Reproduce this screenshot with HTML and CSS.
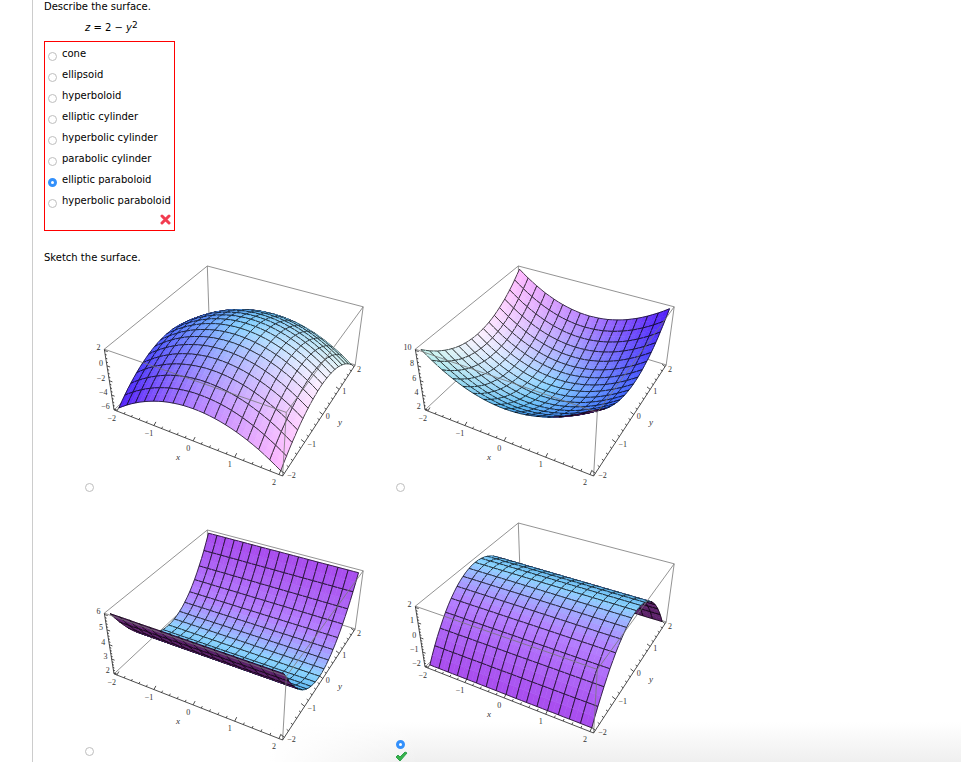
FILE: index.html
```html
<!DOCTYPE html>
<html lang="en">
<head>
  <meta charset="UTF-8">
  <meta name="viewport" content="width=device-width, initial-scale=1.0">
  <title>Describe the surface</title>
  <link rel="stylesheet" href="styles.css">
</head>
<body>

  <main class="question">
    <p class="prompt">Describe the surface.</p>
    <p class="formula"><i>z</i> = 2 − <i>y</i><sup>2</sup></p>

    <fieldset class="choices" aria-label="Describe the surface">
      <label class="choice"><input type="radio" name="surface">cone</label>
      <label class="choice"><input type="radio" name="surface">ellipsoid</label>
      <label class="choice"><input type="radio" name="surface">hyperboloid</label>
      <label class="choice"><input type="radio" name="surface">elliptic cylinder</label>
      <label class="choice"><input type="radio" name="surface">hyperbolic cylinder</label>
      <label class="choice"><input type="radio" name="surface">parabolic cylinder</label>
      <label class="choice"><input type="radio" name="surface" checked>elliptic paraboloid</label>
      <label class="choice"><input type="radio" name="surface">hyperbolic paraboloid</label>
      <div class="mark">
        <svg width="11" height="11" viewBox="0 0 11 11" role="img" aria-label="Incorrect">
          <path d="M2 2 L9 9 M9 2 L2 9" fill="none" stroke="#f23c50" stroke-width="3" stroke-linecap="round"/>
        </svg>
      </div>
    </fieldset>

    <p class="prompt sketch">Sketch the surface.</p>

    <div class="plots">
      <div class="answer">
        <label class="plot-choice">
          <input type="radio" name="sketch">
          <svg class="plot" data-plot="dome" viewBox="0 0 270 228" role="img" aria-label="Paraboloid opening down"></svg>
        </label>
      </div>
      <div class="answer">
        <label class="plot-choice">
          <input type="radio" name="sketch">
          <svg class="plot" data-plot="bowl" viewBox="0 0 270 228" role="img" aria-label="Paraboloid opening up"></svg>
        </label>
      </div>
      <div class="answer">
        <label class="plot-choice">
          <input type="radio" name="sketch">
          <svg class="plot" data-plot="trough" viewBox="0 0 270 228" role="img" aria-label="Parabolic cylinder opening up"></svg>
        </label>
      </div>
      <div class="answer">
        <label class="plot-choice">
          <input type="radio" name="sketch" checked>
          <svg class="plot" data-plot="arch" viewBox="0 0 270 228" role="img" aria-label="Parabolic cylinder opening down"></svg>
        </label>
        <svg class="tick" width="12" height="13" viewBox="0 0 12 13" role="img" aria-label="Correct">
          <path d="M0 8 L2 6 L4 8 L9 3 L11 4 L4 12 Z" fill="#37b34a" stroke="#2ba04a" stroke-width="1" stroke-linejoin="round"/>
        </svg>
      </div>
    </div>
  </main>

  <script src="plots.js"></script>
</body>
</html>
```

FILE: styles.css
```css
body {
  margin: 0;
  min-height: 100vh;
  font-family: "DejaVu Sans", Verdana, sans-serif;
  font-size: 10px;
  color: #000;
  background-color: #fff;
  background-image:
    linear-gradient(to right, #fff 270px, rgba(255, 255, 255, 0) 420px),
    linear-gradient(to top, #efefef, #fff 40px);
}

p {
  margin: 0;
}

.question {
  margin-left: 32px;
  padding-left: 11px;
  border-left: 1px solid #ccc;
}

.prompt {
  line-height: 14px;
}

.formula {
  padding: 1px 0 0 41px;
  line-height: 26px;
}

.formula sup {
  font-size: 9px;
  line-height: 0;
  vertical-align: 3px;
}

.choices {
  width: max-content;
  margin: 0;
  padding: 1px 3px 0;
  border: 1px solid #f00;
}

.choice {
  display: flex;
  align-items: center;
  gap: 5px;
  line-height: 21px;
}

input[type="radio"] {
  appearance: none;
  box-sizing: border-box;
  flex: none;
  width: 9px;
  height: 9px;
  margin: 0;
  border: 1px solid #bebebe;
  border-radius: 50%;
  background: #fff;
}

input[type="radio"]:checked {
  border: 3px solid #3390fb;
}

.choice input[type="radio"] {
  margin-top: 6px;
}

.mark {
  display: flex;
  justify-content: flex-end;
  padding: 3px 0 5px;
}

.sketch {
  padding-top: 20px;
  line-height: 13px;
}

.plots {
  display: grid;
  grid-template-columns: repeat(2, max-content);
  align-items: center;
  gap: 29px 32px;
  padding-left: 41px;
}

.answer {
  display: flex;
  flex-direction: column;
}

.plot-choice {
  display: flex;
  align-items: flex-end;
}

.plot {
  display: block;
  width: 270px;
  height: 228px;
  overflow: visible;
}

.plot .edge {
  stroke: #777;
  stroke-width: 0.8;
}

.plot .axis {
  fill: none;
  stroke: #222;
  stroke-width: 0.8;
}

.plot .mesh {
  fill: none;
  stroke: #000;
  stroke-width: 0.7;
}

.plot text {
  font-family: "Liberation Serif", serif;
  font-size: 8px;
  fill: #333;
}

.plot .name {
  font-size: 9px;
  font-style: italic;
}
```

FILE: plots.js
```js
// 3D surface plots, projected from a fixed camera into each .plot svg
const NS = 'http://www.w3.org/2000/svg';
const DIST = 3.3838;
const SCALE = 622;
const ORIGIN = [146.2, 93.7];
const CELLS = 16;
const SUB = 2;

const plots = {
  dome: { f: (x, y) => 2 - x * x - y * y, min: -6, max: 2, step: 2, minor: 0.5 },
  bowl: { f: (x, y) => 2 + x * x + y * y, min: 2, max: 10, step: 2, minor: 0.5 },
  trough: { f: (x, y) => 2 + y * y, min: 2, max: 6, step: 1, minor: 0.2 },
  arch: { f: (x, y) => 2 - y * y, min: -2, max: 2, step: 1, minor: 0.2 }
};

// surface colour by slope: rows are y slope, columns are x slope -0.8, 0, 0.8
const colours = [
  [[80, 20, 220], [168, 76, 238], [230, 130, 240]],
  [[82, 32, 250], [180, 128, 255], [255, 186, 255]],
  [[72, 100, 255], [140, 212, 255], [253, 242, 255]],
  [[26, 92, 240], [80, 176, 240], [200, 246, 240]]
];

function project(x, y, z) {
  const r = 0.8793 * x + 0.4763 * y;
  const u = -0.2815 * x + 0.5198 * y + 0.8067 * z;
  const d = DIST - 0.3842 * x + 0.7093 * y - 0.5911 * z;
  return [ORIGIN[0] + SCALE * r / d, ORIGIN[1] - SCALE * u / d, d];
}

function mix(a, b, t) {
  return a.map((v, i) => v + (b[i] - v) * t);
}

function colourAt(p, q) {
  const row = Math.max(0, Math.min(2.999, (q + 1.6) / 0.8));
  const col = Math.max(0, Math.min(1.999, (p + 0.8) / 0.8));
  const i = Math.floor(row);
  const j = Math.floor(col);
  const a = mix(colours[i][j], colours[i][j + 1], col - j);
  const b = mix(colours[i + 1][j], colours[i + 1][j + 1], col - j);
  return 'rgb(' + mix(a, b, row - i).map(Math.round).join(',') + ')';
}

function add(svg, tag, attrs, text) {
  const el = document.createElementNS(NS, tag);
  for (const key in attrs) {
    el.setAttribute(key, attrs[key]);
  }
  if (text !== undefined) {
    el.textContent = text;
  }
  svg.appendChild(el);
}

function line(svg, a, b, cls) {
  add(svg, 'line', { x1: a[0].toFixed(1), y1: a[1].toFixed(1), x2: b[0].toFixed(1), y2: b[1].toFixed(1), class: cls });
}

function draw(svg, plot) {
  const range = plot.max - plot.min;
  const toBox = (v) => v / 4.16;
  const toBoxZ = (v) => ((v - plot.min) / range - 0.5) * 0.4 / 1.04;
  const at = (x, y) => project(toBox(x), toBox(y), toBoxZ(plot.f(x, y)));
  const edge = (a, b) => line(svg, project(...a), project(...b), 'edge');

  // back and outline edges of the box
  edge([-0.5, 0.5, -0.2], [-0.5, 0.5, 0.2]);
  edge([-0.5, 0.5, -0.2], [-0.5, -0.5, -0.2]);
  edge([-0.5, 0.5, -0.2], [0.5, 0.5, -0.2]);
  edge([-0.5, 0.5, 0.2], [-0.5, -0.5, 0.2]);
  edge([-0.5, 0.5, 0.2], [0.5, 0.5, 0.2]);
  edge([0.5, 0.5, 0.2], [0.5, 0.5, -0.2]);

  // surface, painted from far to near
  const n = CELLS * SUB;
  const quads = [];
  for (let i = 0; i < n; i++) {
    for (let j = 0; j < n; j++) {
      const x = -2 + 4 * i / n;
      const y = -2 + 4 * j / n;
      const s = 4 / n;
      const pts = [at(x, y), at(x + s, y), at(x + s, y + s), at(x, y + s)];
      const depth = pts.reduce((sum, p) => sum + p[2], 0);
      quads.push({ i, j, x, y, s, pts, depth });
    }
  }
  quads.sort((a, b) => b.depth - a.depth);
  for (const { i, j, x, y, s, pts } of quads) {
    const [a, b, c, d] = pts;
    const area = (c[0] - a[0]) * (d[1] - b[1]) - (c[1] - a[1]) * (d[0] - b[0]);
    const zScale = 1.6 / range;
    const p = -(plot.f(x + s, y + s / 2) - plot.f(x, y + s / 2)) / s * zScale;
    const q = -(plot.f(x + s / 2, y + s) - plot.f(x + s / 2, y)) / s * zScale;
    const fill = area < 0 ? colourAt(p, q) : '#5c2169';
    add(svg, 'polygon', {
      points: pts.map((v) => v[0].toFixed(1) + ',' + v[1].toFixed(1)).join(' '),
      fill,
      stroke: fill,
      'stroke-width': 0.6
    });
    if (i % SUB === 0) line(svg, a, d, 'mesh');
    if ((i + 1) % SUB === 0) line(svg, b, c, 'mesh');
    if (j % SUB === 0) line(svg, a, b, 'mesh');
    if ((j + 1) % SUB === 0) line(svg, d, c, 'mesh');
  }

  // front edges
  edge([0.5, -0.5, 0.2], [-0.5, -0.5, 0.2]);
  edge([0.5, -0.5, 0.2], [0.5, 0.5, 0.2]);
  edge([0.5, -0.5, 0.2], [0.5, -0.5, -0.2]);

  // axes
  line(svg, project(-0.5, -0.5, -0.2), project(0.5, -0.5, -0.2), 'axis');
  line(svg, project(0.5, -0.5, -0.2), project(0.5, 0.5, -0.2), 'axis');
  line(svg, project(-0.5, -0.5, -0.2), project(-0.5, -0.5, 0.2), 'axis');

  const label = (v) => String(v).replace('-', '−');
  for (let k = -10; k <= 10; k++) {
    const v = toBox(k / 5);
    const len = k % 5 === 0 ? 0.02 : 0.01;
    const tx = project(v, -0.5, -0.2);
    const ty = project(0.5, v, -0.2);
    line(svg, tx, project(v, -0.5 + len, -0.2 + len / 2), 'axis');
    line(svg, ty, project(0.5 - len, v, -0.2 + len / 2), 'axis');
    if (k % 5 === 0) {
      add(svg, 'text', { x: tx[0] - 5, y: tx[1] + 10, 'text-anchor': 'middle' }, label(k / 5));
      add(svg, 'text', { x: ty[0] + 3, y: ty[1] + 5 }, label(k / 5));
    }
  }

  const count = Math.round(range / plot.minor);
  const every = Math.round(plot.step / plot.minor);
  for (let k = 0; k <= count; k++) {
    const value = plot.min + k * plot.minor;
    const z = toBoxZ(value);
    const len = k % every === 0 ? 0.02 : 0.01;
    const tz = project(-0.5, -0.5, z);
    line(svg, tz, project(-0.5 + len, -0.5, z), 'axis');
    if (k % every === 0) {
      add(svg, 'text', { x: tz[0] - 4, y: tz[1], 'text-anchor': 'end' }, label(Math.round(value)));
    }
  }

  add(svg, 'text', { x: 82, y: 196, class: 'name' }, 'x');
  add(svg, 'text', { x: 244, y: 161, class: 'name' }, 'y');
}

document.querySelectorAll('.plot').forEach((svg) => draw(svg, plots[svg.dataset.plot]));
```
